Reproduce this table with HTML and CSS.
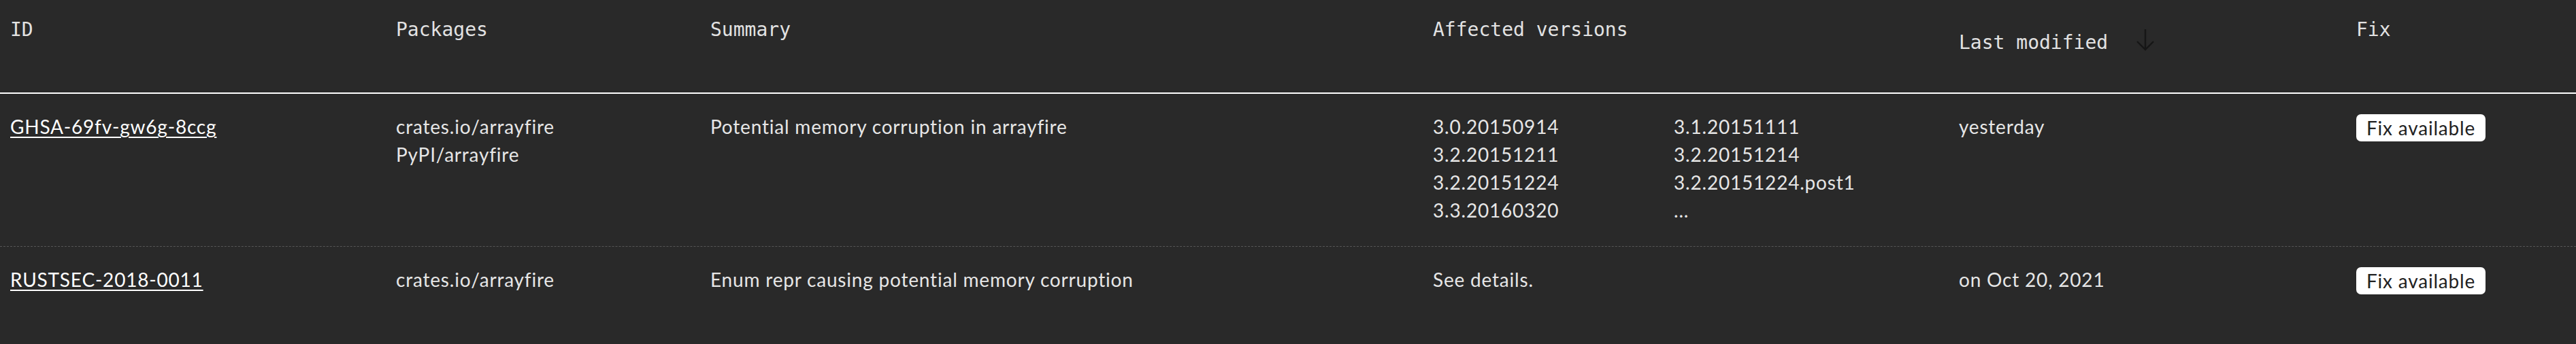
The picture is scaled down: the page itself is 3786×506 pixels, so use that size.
FILE: index.html
```html
<!DOCTYPE html>
<html lang="en">
<head>
<meta charset="utf-8">
<title>Vulnerabilities</title>
<link rel="stylesheet" href="styles.css">
</head>
<body>
<div class="vuln-table">
  <div class="row head">
    <div class="cell">ID</div>
    <div class="cell">Packages</div>
    <div class="cell">Summary</div>
    <div class="cell">Affected versions</div>
    <div class="cell">
      <button class="sort">Last modified
        <svg class="sort-icon" viewBox="0 0 34 34" width="34" height="34" aria-hidden="true">
          <path d="M17 1 V31 M5 19 L17 31 L29 19" fill="none" stroke="currentColor" stroke-width="2.4"/>
        </svg>
      </button>
    </div>
    <div class="cell">Fix</div>
  </div>
  <div class="row body first">
    <div class="cell"><a href="#" class="id-link">GHSA-69fv-gw6g-8ccg</a></div>
    <div class="cell list">
      <span>crates.io/arrayfire</span>
      <span>PyPI/arrayfire</span>
    </div>
    <div class="cell">Potential memory corruption in arrayfire</div>
    <div class="cell versions">
      <span>3.0.20150914</span><span>3.1.20151111</span>
      <span>3.2.20151211</span><span>3.2.20151214</span>
      <span>3.2.20151224</span><span>3.2.20151224.post1</span>
      <span>3.3.20160320</span><span>...</span>
    </div>
    <div class="cell">yesterday</div>
    <div class="cell"><span class="badge">Fix available</span></div>
  </div>
  <div class="row body">
    <div class="cell"><a href="#" class="id-link">RUSTSEC-2018-0011</a></div>
    <div class="cell">crates.io/arrayfire</div>
    <div class="cell">Enum repr causing potential memory corruption</div>
    <div class="cell">See details.</div>
    <div class="cell">on Oct 20, 2021</div>
    <div class="cell"><span class="badge">Fix available</span></div>
  </div>
</div>
</body>
</html>
```

FILE: styles.css
```css
html, body {
  margin: 0;
  padding: 0;
  background: #292929;
}

body {
  font-family: Lato, "Noto Sans", sans-serif;
  color: #e6e6e6;
}

.vuln-table {
  width: 3786px;
}

.row {
  display: grid;
  grid-template-columns: 567px 462px 1062px 773px 584px 1fr;
}

.cell {
  padding: 0 15px;
}

.head {
  height: 136px;
  border-bottom: 2px solid #ffffff;
  font-family: "DejaVu Sans Mono", "Liberation Mono", monospace;
  font-size: 28px;
  line-height: 33px;
  color: #e2e2e2;
  box-sizing: content-box;
}

.head .cell {
  padding-top: 27px;
}

.sort {
  display: flex;
  align-items: flex-start;
  gap: 38px;
  margin: 0;
  padding: 19px 0 0 0;
  border: 0;
  background: none;
  font: inherit;
  color: inherit;
  cursor: pointer;
}

.sort-icon {
  color: #161616;
  margin-top: -4px;
}

.body {
  font-size: 28px;
  line-height: 41px;
  letter-spacing: 0.8px;
  padding: 28px 0 32px;
}

.body.first {
  border-bottom: 1px dashed #565656;
}

.list {
  display: flex;
  flex-direction: column;
}

.versions {
  display: grid;
  grid-template-columns: 354px 1fr;
}

.id-link {
  color: #ffffff;
  text-decoration: underline;
  text-decoration-thickness: 2px;
  text-underline-offset: 4px;
}

.badge {
  display: inline-block;
  background: #ffffff;
  color: #222222;
  border-radius: 7px;
  padding: 0 15px;
  height: 40px;
  line-height: 40px;
  vertical-align: top;
  margin-top: 2px;
}
```
